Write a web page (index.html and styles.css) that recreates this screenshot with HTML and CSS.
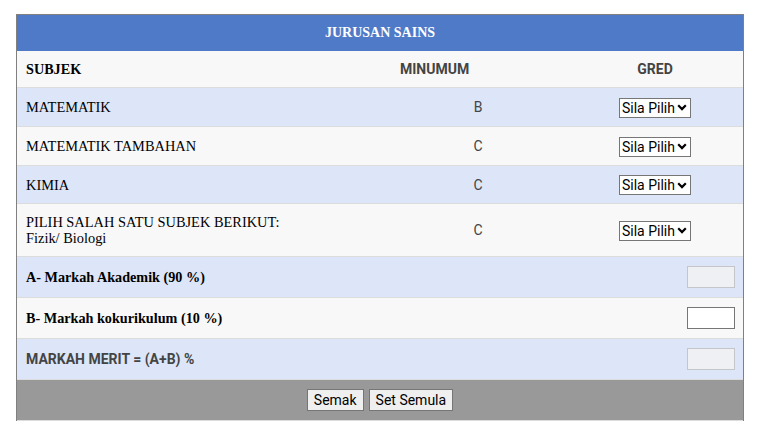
FILE: index.html
```html
<!DOCTYPE html>
<html lang="ms">
<head>
<meta charset="utf-8">
<title>Jurusan Sains</title>
<link rel="stylesheet" href="styles.css">
</head>
<body>
<div class="page">
  <form class="sheet">
    <div class="row head">JURUSAN SAINS</div>
    <div class="row cols alt h36">
      <div class="cell subj bold">SUBJEK</div>
      <div class="cell mid colhead">MINUMUM</div>
      <div class="cell grade colhead center">GRED</div>
    </div>
    <div class="row cols blue h38">
      <div class="cell subj">MATEMATIK</div>
      <div class="cell mid">B</div>
      <div class="cell grade center"><select class="pick"><option>Sila Pilih</option><option>A</option><option>B</option><option>C</option></select></div>
    </div>
    <div class="row cols alt h38">
      <div class="cell subj">MATEMATIK TAMBAHAN</div>
      <div class="cell mid">C</div>
      <div class="cell grade center"><select class="pick"><option>Sila Pilih</option><option>A</option><option>B</option><option>C</option></select></div>
    </div>
    <div class="row cols blue h37">
      <div class="cell subj">KIMIA</div>
      <div class="cell mid">C</div>
      <div class="cell grade center"><select class="pick"><option>Sila Pilih</option><option>A</option><option>B</option><option>C</option></select></div>
    </div>
    <div class="row cols alt h52">
      <div class="cell subj two">PILIH SALAH SATU SUBJEK BERIKUT:<br>Fizik/ Biologi</div>
      <div class="cell mid">C</div>
      <div class="cell grade center"><select class="pick"><option>Sila Pilih</option><option>A</option><option>B</option><option>C</option></select></div>
    </div>
    <div class="row split blue h40">
      <div class="cell subj bold">A- Markah Akademik (90 %)</div>
      <input class="box ro" type="text" readonly>
    </div>
    <div class="row split alt h40">
      <div class="cell subj bold">B- Markah kokurikulum (10 %)</div>
      <input class="box" type="text">
    </div>
    <div class="row split blue h40">
      <div class="cell merit">MARKAH MERIT = (A+B) %</div>
      <input class="box ro" type="text" readonly>
    </div>
    <div class="row foot">
      <button type="button" class="btn">Semak</button>
      <button type="reset" class="btn">Set Semula</button>
    </div>
  </form>
</div>
</body>
</html>
```
FILE: styles.css
```css
html, body {
  margin: 0;
  padding: 0;
  background: #ffffff;
}

.page {
  padding: 14px 0 0 16px;
}

.sheet {
  width: 728px;
  box-sizing: border-box;
  border-top: 1px solid #808080;
  border-left: 1px solid #808080;
  border-right: 1px solid #808080;
  margin: 0;
  font-family: "Liberation Serif", "Times New Roman", serif;
  font-size: 14.4px;
  color: #000;
}

.row {
  box-sizing: content-box;
  border-bottom: 1px solid #dcdcdc;
}

.head {
  height: 35px;
  background: #4f7ac8;
  color: #ffffff;
  font-weight: bold;
  font-size: 14px;
  display: flex;
  align-items: center;
  justify-content: center;
  border-bottom: 1px solid #4f7ac8;
}

.cols {
  display: grid;
  grid-template-columns: 372px 178px 1fr;
  align-items: center;
}

.split {
  display: flex;
  align-items: center;
  justify-content: space-between;
  padding-right: 8px;
}

.h36 { height: 36px; }
.h37 { height: 37px; }
.h38 { height: 38px; }
.h40 { height: 40px; }
.h52 { height: 52px; }

.alt { background: #f8f8f8; }
.blue { background: #dce6f8; }

.cell {
  line-height: 16px;
}

.subj {
  padding-left: 9px;
}

.bold {
  font-weight: bold;
  font-size: 14.2px;
}

.mid {
  font-family: Roboto, "Liberation Sans", sans-serif;
  font-size: 14px;
  color: #444;
  text-align: center;
}

.colhead {
  font-weight: bold;
  text-align: left;
  padding-left: 11px;
}

.grade {
  font-family: Roboto, "Liberation Sans", sans-serif;
  font-size: 14px;
  color: #444;
}

.grade.colhead {
  padding-left: 0;
}

.center {
  text-align: center;
  display: flex;
  justify-content: center;
}

.merit {
  padding-left: 9px;
  font-family: Roboto, "Liberation Sans", sans-serif;
  font-weight: bold;
  font-size: 14px;
  color: #444;
}

.pick {
  appearance: none;
  -webkit-appearance: none;
  box-sizing: border-box;
  width: 72px;
  height: 20px;
  margin: 1px 0 0 0;
  padding: 0 13px 0 2px;
  font-family: Roboto, "Liberation Sans", sans-serif;
  font-size: 14px;
  line-height: 18px;
  color: #000;
  background-color: #ffffff;
  background-image: url("data:image/svg+xml,%3Csvg xmlns='http://www.w3.org/2000/svg' width='10' height='7' viewBox='0 0 10 7'%3E%3Cpath d='M1.2 1.3 L5 5.1 L8.8 1.3' fill='none' stroke='%23000' stroke-width='2.2'/%3E%3C/svg%3E");
  background-repeat: no-repeat;
  background-position: right 3px center;
  background-size: 10px 7px;
  border: 1px solid #767676;
  border-radius: 0;
}

.box {
  width: 48px;
  height: 22px;
  box-sizing: border-box;
  margin: 0;
  padding: 1px 2px;
  border: 1px solid #767676;
  background: #ffffff;
  border-radius: 0;
  font-family: Roboto, "Liberation Sans", sans-serif;
  font-size: 13.33px;
}

.box.ro {
  background: #eef0f4;
  border-color: #c4c6c9;
}

.foot {
  height: 40px;
  background: #999999;
  display: flex;
  align-items: center;
  justify-content: center;
  gap: 5px;
  border-bottom: 1px solid #dcdcdc;
}

.btn {
  margin: 0;
  height: 22px;
  padding: 0 6px;
  font-family: Roboto, "Liberation Sans", sans-serif;
  font-size: 14px;
  line-height: 18px;
  color: #000;
  background: #efefef;
  border: 1px solid #767676;
  border-radius: 0;
}
```
